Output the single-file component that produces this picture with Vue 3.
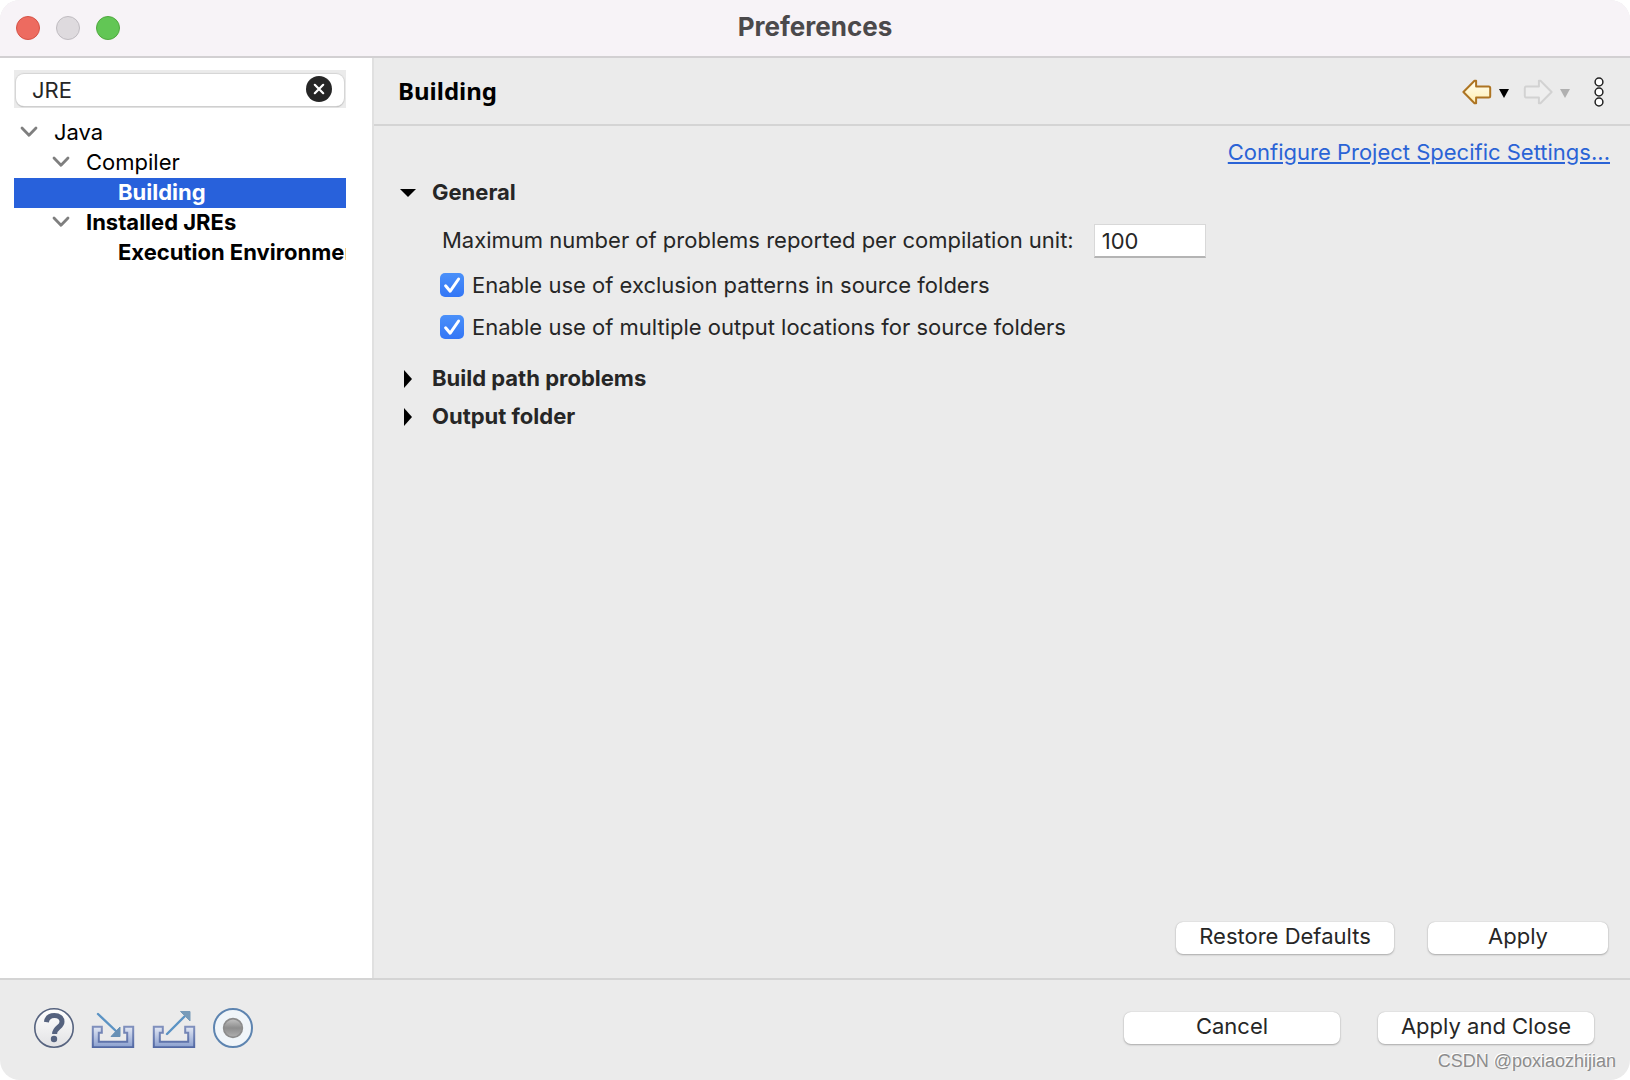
<script setup>
import { ref } from 'vue'

const filter = ref('JRE')
const maxProblems = ref('100')
const tree = [
  { label: 'Java', level: 0, open: true },
  { label: 'Compiler', level: 1, open: true },
  { label: 'Building', level: 2, bold: true, selected: true },
  { label: 'Installed JREs', level: 1, open: true, bold: true },
  { label: 'Execution Environments', level: 2, bold: true },
]
const options = ref([
  { id: 'exclusion', label: 'Enable use of exclusion patterns in source folders', on: true },
  { id: 'outputs', label: 'Enable use of multiple output locations for source folders', on: true },
])
</script>

<template>
  <div class="window">
    <header class="titlebar">
      <div class="lights">
        <button class="light close" aria-label="Close"></button>
        <button class="light minimize" aria-label="Minimize" disabled></button>
        <button class="light zoom" aria-label="Zoom"></button>
      </div>
      <h1>Preferences</h1>
    </header>

    <div class="body">
      <aside class="sidebar">
        <div class="search">
          <input v-model="filter" type="text" aria-label="Filter preferences" />
          <button class="clear" aria-label="Clear filter" @click="filter = ''">
            <svg width="26" height="26" viewBox="0 0 26 26">
              <circle cx="13" cy="13" r="13" fill="#262626" />
              <path d="M8.8 8.8l8.4 8.4M17.2 8.8l-8.4 8.4" stroke="#fff" stroke-width="2.2" stroke-linecap="round" />
            </svg>
          </button>
        </div>
        <ul class="tree">
          <li
            v-for="node in tree"
            :key="node.label"
            :class="['level-' + node.level, { bold: node.bold, selected: node.selected }]"
          >
            <span class="twisty">
              <svg v-if="node.open" width="18" height="12" viewBox="0 0 18 12">
                <path d="M2 2l7 7.2L16 2" fill="none" stroke="#7f7f7f" stroke-width="2.8" stroke-linecap="round" stroke-linejoin="round" />
              </svg>
            </span>
            <span>{{ node.label }}</span>
          </li>
        </ul>
      </aside>

      <main class="page">
        <div class="page-head">
          <h2>Building</h2>
          <div class="tools">
            <button class="tool" aria-label="Back">
              <svg width="30" height="26" viewBox="0 0 30 26">
                <defs>
                  <linearGradient id="gold" x1="0" y1="0" x2="0" y2="1">
                    <stop offset="0" stop-color="#fffef2" />
                    <stop offset="1" stop-color="#ffeeb0" />
                  </linearGradient>
                </defs>
                <path d="M1.4 13L12.5 1.8h1.6v5.6h12.6a1.5 1.5 0 0 1 1.5 1.5v8.2a1.5 1.5 0 0 1-1.5 1.5H14.1v5.6h-1.6z" fill="url(#gold)" stroke="#ad7422" stroke-width="2" stroke-linejoin="round" />
              </svg>
            </button>
            <button class="tool drop" aria-label="Back history">
              <svg width="10" height="9" viewBox="0 0 10 9"><path d="M0 0h10L5 9z" fill="#000" /></svg>
            </button>
            <button class="tool next" aria-label="Forward" disabled>
              <svg width="30" height="26" viewBox="0 0 30 26">
                <path d="M28.6 13L17.5 1.8h-1.6v5.6H3.3a1.5 1.5 0 0 0-1.5 1.5v8.2a1.5 1.5 0 0 0 1.5 1.5h12.6v5.6h1.6z" fill="#eee" stroke="#d2d2d2" stroke-width="2" stroke-linejoin="round" />
              </svg>
            </button>
            <button class="tool drop" aria-label="Forward history" disabled>
              <svg width="10" height="9" viewBox="0 0 10 9"><path d="M0 0h10L5 9z" fill="#b0b0b0" /></svg>
            </button>
            <button class="tool menu" aria-label="View menu">
              <svg width="10" height="30" viewBox="0 0 10 30">
                <g fill="#fff" stroke="#222" stroke-width="1.5">
                  <circle cx="5" cy="5" r="3.9" />
                  <circle cx="5" cy="15" r="3.9" />
                  <circle cx="5" cy="25" r="3.9" />
                </g>
              </svg>
            </button>
          </div>
        </div>

        <div class="link-row"><a href="#">Configure Project Specific Settings...</a></div>

        <div class="sections">
          <section>
            <button class="section-title" aria-expanded="true">
              <span class="arrow">
                <svg width="16" height="8" viewBox="0 0 16 8"><path d="M0 0h16L8 8z" /></svg>
              </span>
              General
            </button>
            <div class="fields">
              <div class="field">
                <label for="max-problems">Maximum number of problems reported per compilation unit:</label>
                <input id="max-problems" v-model="maxProblems" type="text" />
              </div>
              <div v-for="option in options" :key="option.id" class="check">
                <input :id="option.id" v-model="option.on" type="checkbox" />
                <svg class="mark" width="24" height="24" viewBox="0 0 24 24">
                  <path d="M5.6 12.8l4.6 5.4L18.6 6" fill="none" stroke="#fff" stroke-width="3" stroke-linecap="round" stroke-linejoin="round" />
                </svg>
                <label :for="option.id">{{ option.label }}</label>
              </div>
            </div>
          </section>
          <button v-for="name in ['Build path problems', 'Output folder']" :key="name" class="section-title" aria-expanded="false">
            <span class="arrow">
              <svg width="8" height="18" viewBox="0 0 8 18"><path d="M0 0v18l8-9z" /></svg>
            </span>
            {{ name }}
          </button>
        </div>

        <div class="page-actions">
          <button class="push restore">Restore Defaults</button>
          <button class="push apply">Apply</button>
        </div>
      </main>
    </div>

    <footer class="footer">
      <div class="icons">
        <button class="tool" aria-label="Help">
          <svg width="40" height="40" viewBox="0 0 40 40">
            <defs>
              <linearGradient id="help" x1="0" y1="0" x2="0" y2="1">
                <stop offset="0" stop-color="#fff" />
                <stop offset="1" stop-color="#e2e2e4" />
              </linearGradient>
            </defs>
            <circle cx="20" cy="20" r="19.2" fill="url(#help)" stroke="#56637f" stroke-width="1.6" />
            <path d="M12.4 14.2c.6-4.4 3.6-6.8 8-6.8 4.6 0 7.6 2.5 7.6 6.3 0 5.7-7.4 5.500-7.4 12.300" fill="none" stroke="#56637f" stroke-width="5" />
            <circle cx="20" cy="31" r="3.2" fill="#56637f" />
          </svg>
        </button>
        <button class="tool" aria-label="Import">
          <svg width="44" height="40" viewBox="0 0 44 40">
            <defs>
              <linearGradient id="tray" x1="0" y1="0" x2="0" y2="1">
                <stop offset="0" stop-color="#e3e8f4" />
                <stop offset="1" stop-color="#8ba0cf" />
              </linearGradient>
              <linearGradient id="trayEdge" x1="0" y1="0" x2="0" y2="1">
                <stop offset="0" stop-color="#8090bd" />
                <stop offset="1" stop-color="#5369a4" />
              </linearGradient>
            </defs>
            <path d="M1.8 18.8h9v6H7.800v9h28.4v-9h-3v-6h9v20.4H1.8z" fill="url(#tray)" stroke="url(#trayEdge)" stroke-width="2" />
            <path d="M7 6L26 24" stroke="#5b93c4" stroke-width="2.4" stroke-linecap="round" />
            <path d="M29 19v9.500H20z" fill="#6790b5" stroke="#6790b5" />
          </svg>
        </button>
        <button class="tool" aria-label="Export">
          <svg width="44" height="40" viewBox="0 0 44 40">
            <path d="M1.8 18.8h9v6H7.800v9h28.4v-9h-3v-6h9v20.4H1.8z" fill="url(#tray)" stroke="url(#trayEdge)" stroke-width="2" />
            <path d="M15 26L33 8" stroke="#5b93c4" stroke-width="2.4" stroke-linecap="round" />
            <path d="M28.5 3.500H38v9.500z" fill="#789bb9" stroke="#789bb9" />
          </svg>
        </button>
        <button class="tool" aria-label="Record preferences">
          <svg width="40" height="40" viewBox="0 0 40 40">
            <defs>
              <linearGradient id="knob" x1="0" y1="0" x2="0" y2="1">
                <stop offset="0" stop-color="#c4c4c4" />
                <stop offset="0.5" stop-color="#8d8d8d" />
                <stop offset="1" stop-color="#b0b0b0" />
              </linearGradient>
            </defs>
            <circle cx="20" cy="20" r="19" fill="#f0f5f9" stroke="#5d84b0" stroke-width="2" />
            <circle cx="20" cy="20" r="9.4" fill="url(#knob)" stroke="#8c8c8c" stroke-width="1.6" />
          </svg>
        </button>
      </div>
      <div class="footer-side">
        <div class="dialog-actions">
          <button class="push">Cancel</button>
          <button class="push">Apply and Close</button>
        </div>
        <p class="credit">CSDN @poxiaozhijian</p>
      </div>
    </footer>
  </div>
</template>

<style>
body {
  margin: 0;
  background: #fff;
}
</style>

<style scoped>
* {
  box-sizing: border-box;
}
.window {
  display: flex;
  flex-direction: column;
  min-height: 100vh;
  overflow: hidden;
  border-radius: 20px;
  background: #ebebeb;
  color: #262626;
  font: 22px/30px Inter, "Liberation Sans", sans-serif;
}
button,
input {
  margin: 0;
  padding: 0;
  border: 0;
  color: inherit;
  font: inherit;
}
button {
  background: none;
}
svg {
  display: block;
}
h1,
h2,
p,
ul {
  margin: 0;
  padding: 0;
}
.titlebar {
  display: grid;
  grid-template-columns: 1fr auto 1fr;
  align-items: center;
  height: 58px;
  padding: 0 16px;
  border-bottom: 2px solid #d2d0d2;
  background: #f7f3f7;
}
.lights {
  display: flex;
  gap: 16px;
}
.light {
  width: 24px;
  height: 24px;
  border: 1px solid;
  border-radius: 50%;
}
.close {
  border-color: #d55246;
  background: #ed6b60;
}
.minimize {
  border-color: #bfbbc0;
  background: #dedade;
}
.zoom {
  border-color: #50a83f;
  background: #62c655;
}
.titlebar h1 {
  padding-bottom: 2px;
  color: #4b494b;
  font-size: 26px;
  font-weight: 700;
  line-height: 30px;
}
.body {
  display: flex;
  flex: 1;
}
.sidebar {
  flex: none;
  width: 374px;
  padding: 12px 26px 12px 14px;
  border-right: 2px solid #e0e0e0;
  background: #fff;
}
.search {
  display: flex;
  position: relative;
  padding: 4px 2px 2px;
  background: #ebebeb;
}
.search input {
  width: 100%;
  height: 32px;
  padding: 0 48px 0 16px;
  border-radius: 8px;
  background: #fff;
  box-shadow: 0 0 1px 1px #d4d4d4, 0 1px 1px #999;
}
.clear {
  position: absolute;
  top: 6px;
  right: 14px;
}
.tree {
  padding-top: 10px;
  color: #000;
  list-style: none;
}
.tree li {
  display: flex;
  align-items: center;
  height: 30px;
  padding-bottom: 2px;
  overflow: hidden;
  white-space: nowrap;
}
.twisty {
  flex: none;
  width: 34px;
}
.level-0 {
  padding-left: 6px;
}
.level-1 {
  padding-left: 38px;
}
.level-2 {
  padding-left: 70px;
}
.bold {
  font-weight: 700;
}
.selected {
  background: #2861db;
  color: #fff;
}
.page {
  display: flex;
  flex: 1;
  flex-direction: column;
  min-width: 0;
}
.page-head {
  display: flex;
  align-items: center;
  justify-content: space-between;
  height: 68px;
  padding: 0 26px 0 24px;
  border-bottom: 2px solid #d4d4d4;
}
.page-head h2 {
  color: #000;
  font: bold 24px/30px "Noto Sans", "Open Sans", sans-serif;
}
.tools {
  display: flex;
  align-items: center;
  padding-top: 2px;
}
.drop {
  margin-left: 7px;
  padding-top: 2px;
}
.next {
  margin-left: 14px;
}
.menu {
  margin-left: 24px;
}
.link-row {
  padding: 11px 20px 0;
  text-align: right;
}
.link-row a {
  color: #2a63d6;
}
.sections {
  display: flex;
  flex-direction: column;
  align-items: flex-start;
  gap: 8px;
  padding: 10px 26px;
}
.section-title {
  display: flex;
  align-items: center;
  font-weight: 700;
}
.arrow {
  display: flex;
  justify-content: center;
  width: 16px;
  margin-right: 16px;
  padding-top: 2px;
}
.fields {
  padding: 17px 0 13px 40px;
}
.field {
  display: flex;
  align-items: center;
  gap: 20px;
  margin-bottom: 12px;
}
.field label {
  padding: 0 0 2px 2px;
}
.field input {
  width: 112px;
  height: 34px;
  padding: 0 7px;
  border: 1px solid #d8d8d8;
  border-bottom: 2px solid #b4b4b4;
  background: #fff;
}
.check {
  display: flex;
  position: relative;
  align-items: center;
  gap: 8px;
}
.check + .check {
  margin-top: 12px;
}
.check input {
  width: 24px;
  height: 24px;
  border-radius: 5px;
  appearance: none;
  background: #fff;
}
.check input:checked {
  background: linear-gradient(#4a90f9, #3376f6);
}
.mark {
  position: absolute;
  left: 0;
  pointer-events: none;
}
.page-actions {
  display: flex;
  justify-content: flex-end;
  gap: 34px;
  margin-top: auto;
  padding: 0 22px 24px;
}
.push {
  width: 216px;
  height: 32px;
  padding-bottom: 4px;
  border-radius: 7px;
  background: #fff;
  box-shadow: 0 0 1px #aaa, 0 1px 2px #aaa;
  line-height: 28px;
}
.restore {
  width: 218px;
}
.apply {
  width: 180px;
}
.footer {
  display: flex;
  justify-content: space-between;
  height: 102px;
  padding: 0 14px 0 34px;
  border-top: 2px solid #d4d4d4;
}
.icons {
  display: flex;
  align-items: flex-start;
  gap: 17px;
  padding-top: 28px;
}
.footer-side {
  display: flex;
  flex-direction: column;
  align-items: flex-end;
  padding-top: 32px;
}
.dialog-actions {
  display: flex;
  gap: 38px;
  padding-right: 22px;
}
.credit {
  padding-top: 6px;
  color: #8c8c8c;
  font: 18px/22px "Liberation Sans", Arial, sans-serif;
  text-shadow: -1px -1px 0 #fff;
}
</style>
